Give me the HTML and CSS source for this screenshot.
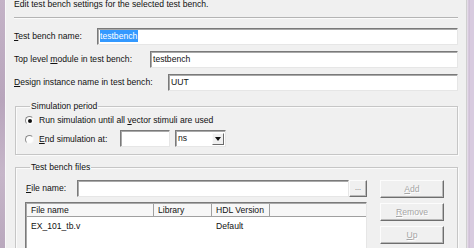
FILE: index.html
```
<!DOCTYPE html>
<html lang="en">
<head>
    <meta charset="UTF-8">
    <title>Test Bench Settings</title>
    <link rel="stylesheet" href="styles.css">
</head>
<body>
<div class="window">
  <div class="frame-left"></div>
  <div class="dialog">
    <p class="intro">Edit test bench settings for the selected test bench.</p>
    <div class="sep"></div>

    <div class="field-row first">
      <span class="label w-name"><u>T</u>est bench name:</span>
      <div class="edit"><span class="selected">testbench</span></div>
    </div>
    <div class="field-row">
      <span class="label w-top">Top level <u>m</u>odule in test bench:</span>
      <div class="edit">testbench</div>
    </div>
    <div class="field-row">
      <span class="label w-inst"><u>D</u>esign instance name in test bench:</span>
      <div class="edit">UUT</div>
    </div>

    <fieldset class="group sim">
      <legend>Simulation period</legend>
      <div class="radio-row">
        <span class="radio checked"></span>
        <span>Run simulation until all <u>v</u>ector stimuli are used</span>
      </div>
      <div class="radio-row">
        <span class="radio"></span>
        <span class="w-end"><u>E</u>nd simulation at:</span>
        <div class="edit time"></div>
        <div class="combo">
          <span class="combo-text">ns</span>
          <span class="combo-btn"><span class="arrow"></span></span>
        </div>
      </div>
    </fieldset>

    <fieldset class="group files">
      <legend>Test bench files</legend>
      <div class="files-body">
        <div class="files-main">
          <div class="file-row">
            <span class="label w-file"><u>F</u>ile name:</span>
            <div class="edit"></div>
            <span class="btn browse">...</span>
          </div>
          <div class="list">
            <div class="list-head">
              <span class="col c-name">File name</span>
              <span class="col c-lib">Library</span>
              <span class="col c-hdl">HDL Version</span>
              <span class="col c-rest"></span>
            </div>
            <div class="list-item">
              <span class="cell c-name">EX_101_tb.v</span>
              <span class="cell c-lib"></span>
              <span class="cell c-hdl">Default</span>
            </div>
          </div>
        </div>
        <div class="side-buttons">
          <span class="btn cmd"><u>A</u>dd</span>
          <span class="btn cmd"><u>R</u>emove</span>
          <span class="btn cmd"><u>U</u>p</span>
        </div>
      </div>
    </fieldset>
  </div>
  <div class="frame-right"></div>
</div>
</body>
</html>
```

FILE: styles.css
```
html, body {
  margin: 0;
  padding: 0;
}

body {
  width: 474px;
  height: 248px;
  overflow: hidden;
  font-family: "Liberation Sans", Arial, sans-serif;
  font-size: 8.6px;
  line-height: 11px;
  color: #111;
  background: #f0f0f0;
}

u { text-decoration: underline; text-underline-offset: 1px; }

.window {
  display: flex;
  height: 248px;
  overflow: hidden;
}

.frame-left {
  width: 5px;
  flex: none;
  background: linear-gradient(#c4b3c7, #b8a5bc 40%, #c6b6c9 70%, #b9a8bd);
  border-right: 1px solid #f9f9f9;
}

.frame-right {
  width: 7px;
  flex: none;
  border-left: 1px solid #cfcfcf;
  background: linear-gradient(90deg, #e4dbe8 0, #e4dbe8 1px, #c8b6cf 2px, #d8cbdf 3px, #d8cbdf);
}

.dialog {
  flex: 1;
  padding: 0 8px;
  background: #f0f0f0;
  overflow: hidden;
}

.intro {
  margin: -1px 0 0;
  white-space: nowrap;
}

.sep {
  margin-top: 7px;
  border-top: 1px solid #b4b4b4;
  border-bottom: 1px solid #fbfbfb;
}

/* edit boxes */
.edit {
  height: 17px;
  box-sizing: border-box;
  background: #fff;
  border: 1px solid;
  border-color: #7a7a7a #e6e6e6 #e6e6e6 #7a7a7a;
  box-shadow: inset 1px 1px 0 #a9a9a9;
  padding: 2px 0 0 2px;
  line-height: 11px;
  flex: 1;
  white-space: nowrap;
}

.selected {
  background: #3399ff;
  color: #fff;
  padding: 1px 1px 1px 0;
}

.field-row {
  display: flex;
  align-items: center;
  margin-top: 6px;
}

.field-row.first { margin-top: 9px; }

.label { flex: none; white-space: nowrap; }
.w-name { width: 83px; }
.w-top { width: 136px; }
.w-inst { width: 154px; }

/* group boxes */
.group {
  margin: 0 0 0 1px;
  padding: 0;
  border: 1px solid #c6c6c6;
  box-shadow: inset 1px 1px 0 #fbfbfb, 1px 1px 0 #fbfbfb;
}

.group legend {
  margin-left: 5px;
  padding: 0 1px;
}

.sim {
  margin-top: 10px;
  padding: 0 0 6px 9px;
}

.radio-row {
  display: flex;
  align-items: center;
  height: 17px;
}

.radio-row + .radio-row { margin-top: 2px; }

.radio {
  width: 9px;
  height: 9px;
  box-sizing: border-box;
  border-radius: 50%;
  border: 1px solid;
  border-color: #8a8a8a #f4f4f4 #f4f4f4 #8a8a8a;
  background: #fdfdfd;
  margin-right: 5px;
  display: flex;
  align-items: center;
  justify-content: center;
  flex: none;
}

.radio.checked::after {
  content: "";
  width: 4px;
  height: 4px;
  border-radius: 50%;
  background: #111;
}

.w-end { width: 81px; flex: none; }

.edit.time {
  flex: none;
  width: 50px;
  margin-top: -2px;
}

.combo {
  width: 51px;
  height: 17px;
  box-sizing: border-box;
  margin: -2px 0 0 5px;
  background: #fff;
  border: 1px solid;
  border-color: #7a7a7a #e6e6e6 #e6e6e6 #7a7a7a;
  box-shadow: inset 1px 1px 0 #a9a9a9;
  display: flex;
  align-items: center;
  padding: 0 1px 0 2px;
}

.combo-text { flex: 1; }

.combo-btn {
  width: 12px;
  height: 12px;
  box-sizing: border-box;
  background: #f0f0f0;
  border: 1px solid;
  border-color: #fbfbfb #6b6b6b #6b6b6b #fbfbfb;
  display: flex;
  align-items: center;
  justify-content: center;
}

.arrow {
  width: 0;
  height: 0;
  border-left: 3.5px solid transparent;
  border-right: 3.5px solid transparent;
  border-top: 4px solid #111;
}

/* files group */
.files {
  margin-top: 7px;
  padding: 0 13px 0 9px;
}

.files-body {
  display: flex;
  padding-top: 7px;
}

.files-main {
  width: 342px;
  flex: none;
}

.file-row {
  display: flex;
  align-items: center;
  height: 17px;
  padding-left: 1px;
}

.w-file { width: 51px; }

.btn {
  box-sizing: border-box;
  background: #f0f0f0;
  border: 1px solid;
  border-color: #fcfcfc #6e6e6e #6e6e6e #fcfcfc;
  box-shadow: inset -1px -1px 0 #b9b9b9;
  display: flex;
  align-items: center;
  justify-content: center;
}

.browse {
  width: 18px;
  height: 17px;
  flex: none;
  font-size: 7px;
  color: #555;
  padding-bottom: 2px;
}

.list {
  margin-top: 5px;
  height: 60px;
  background: #fff;
  border: 1px solid;
  border-color: #7a7a7a #e6e6e6 #e6e6e6 #7a7a7a;
  box-shadow: inset 1px 1px 0 #a9a9a9;
  padding: 1px 0 0 1px;
}

.list-head {
  display: flex;
  height: 12px;
  border-bottom: 1px solid #a0a0a0;
  background: #f7f7f7;
}

.col {
  box-sizing: border-box;
  padding-left: 4px;
  border-right: 1px solid #a0a0a0;
  line-height: 12px;
  white-space: nowrap;
}

.c-name { width: 127px; flex: none; }
.c-lib { width: 58px; flex: none; }
.c-hdl { width: 58px; flex: none; }
.c-rest { flex: 1; border-right: none; }

.list-item {
  display: flex;
  margin-top: 4px;
}

.cell {
  box-sizing: border-box;
  padding-left: 4px;
  white-space: nowrap;
}

.side-buttons {
  margin-left: 13px;
  display: flex;
  flex-direction: column;
  gap: 5px;
}

.cmd {
  width: 64px;
  height: 18px;
  color: #a6a6a6;
  text-shadow: 1px 1px 0 #fff;
}
```
